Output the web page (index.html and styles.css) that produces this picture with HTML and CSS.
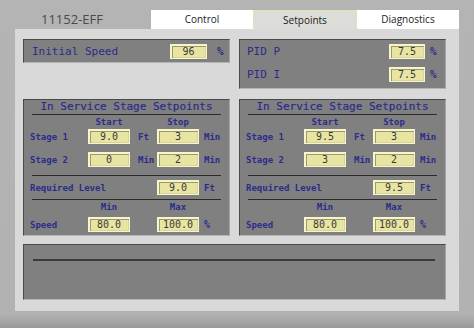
FILE: index.html
```html
<!DOCTYPE html>
<html>
<head>
<meta charset="utf-8">
<link rel="stylesheet" href="styles.css">
</head>
<body>
<div class="top">
  <div class="title">11152-EFF</div>
  <div class="tab">Control</div>
  <div class="tab active">Setpoints</div>
  <div class="tab">Diagnostics</div>
</div>
<div class="panel">
  <div class="grid">
    <div class="box box-speed">
      <span class="big-label">Initial Speed</span>
      <span class="val w37">96</span>
      <span class="unit pct u-speed">%</span>
    </div>
    <div class="box box-pid">
      <div class="pid-row"><span class="big-label">PID P</span><span class="val w36">7.5</span><span class="unit pct u-pid">%</span></div>
      <div class="pid-row"><span class="big-label">PID I</span><span class="val w36">7.5</span><span class="unit pct u-pid">%</span></div>
    </div>

    <div class="box stage">
      <div class="stage-head">In Service Stage Setpoints</div>
      <div class="rule"></div>
      <div class="srow colhead"><span></span><span class="ch">Start</span><span></span><span class="ch">Stop</span><span></span></div>
      <div class="srow r1"><span class="lbl">Stage 1</span><span class="val">9.0</span><span class="unit">Ft</span><span class="val">3</span><span class="unit u2">Min</span></div>
      <div class="srow r2"><span class="lbl">Stage 2</span><span class="val">0</span><span class="unit">Min</span><span class="val">2</span><span class="unit u2">Min</span></div>
      <div class="rule r-a"></div>
      <div class="srow r3"><span class="lbl span3">Required Level</span><span class="val">9.0</span><span class="unit u2">Ft</span></div>
      <div class="rule r-b"></div>
      <div class="srow colhead ch2"><span></span><span class="ch">Min</span><span></span><span class="ch">Max</span><span></span></div>
      <div class="srow r4"><span class="lbl">Speed</span><span class="val">80.0</span><span></span><span class="val">100.0</span><span class="unit u2 pct-s">%</span></div>
    </div>

    <div class="box stage">
      <div class="stage-head">In Service Stage Setpoints</div>
      <div class="rule"></div>
      <div class="srow colhead"><span></span><span class="ch">Start</span><span></span><span class="ch">Stop</span><span></span></div>
      <div class="srow r1"><span class="lbl">Stage 1</span><span class="val">9.5</span><span class="unit">Ft</span><span class="val">3</span><span class="unit u2">Min</span></div>
      <div class="srow r2"><span class="lbl">Stage 2</span><span class="val">3</span><span class="unit">Min</span><span class="val">2</span><span class="unit u2">Min</span></div>
      <div class="rule r-a"></div>
      <div class="srow r3"><span class="lbl span3">Required Level</span><span class="val">9.5</span><span class="unit u2">Ft</span></div>
      <div class="rule r-b"></div>
      <div class="srow colhead ch2"><span></span><span class="ch">Min</span><span></span><span class="ch">Max</span><span></span></div>
      <div class="srow r4"><span class="lbl">Speed</span><span class="val">80.0</span><span></span><span class="val">100.0</span><span class="unit u2 pct-s">%</span></div>
    </div>

    <div class="box bottom">
      <div class="bottom-rule"></div>
    </div>
  </div>
</div>
</body>
</html>
```
FILE: styles.css
```css
* { box-sizing: border-box; }
html, body { margin: 0; padding: 0; }
body {
  width: 474px;
  height: 328px;
  overflow: hidden;
  background: linear-gradient(to bottom, #b4b4b4 0, #b2b2b2 314px, #a8a8a8 320px, #9a9a9a 328px);
  font-family: "DejaVu Sans Mono", monospace;
}
.top {
  display: flex;
  align-items: flex-end;
  height: 29px;
}
.title {
  width: 151px;
  height: 19px;
  padding-left: 41px;
  line-height: 19px;
  font-family: "Open Sans", sans-serif;
  font-size: 13px;
  color: #4a4a4a;
}
.tab {
  width: 102px;
  height: 19px;
  background: #fff;
  text-align: center;
  line-height: 19px;
  font-family: "Open Sans", sans-serif;
  font-size: 10px;
  color: #222;
}
.tab.active {
  width: 104px;
  background: #dcdcd8;
  border: 1px solid #e4e0b2;
  border-bottom: none;
  line-height: 18px;
}
.panel {
  margin-left: 15px;
  width: 444px;
  height: 282px;
  background: #d9d9d9;
}
.grid {
  display: grid;
  grid-template-columns: 207px 207px;
  column-gap: 9px;
  row-gap: 10px;
  padding: 10px 0 0 8px;
  align-items: start;
}
.box {
  background: #808080;
  border-top: 1px solid #4a4a4a;
  border-left: 1px solid #4a4a4a;
  border-right: 1px solid #a4a4a4;
  border-bottom: 1px solid #b4b4b4;
}
.big-label {
  font-size: 11px;
  color: #2c2c8a;
  flex: 1;
}
.val {
  display: block;
  height: 15px;
  background: #e8e4a2;
  border: 1px solid #f8f5cc;
  box-shadow: inset 1px 1px 0 #f8f5cc, inset 2px 2px 0 #9c9870, inset -1px -1px 0 #d8d49a;
  text-align: center;
  font-size: 10px;
  line-height: 13px;
  color: #3a3a3a;
}
.unit {
  font-size: 9px;
  font-weight: bold;
  color: #2c2c8a;
}
.pct { font-size: 11px; }
.pct-s { font-size: 10px; }
.box-speed {
  height: 24px;
  display: flex;
  align-items: center;
  padding-left: 8px;
}
.w37 { width: 37px; }
.w36 { width: 36px; }
.u-speed { margin-left: 10px; width: 12px; }
.box-pid { height: 50px; }
.pid-row {
  display: flex;
  align-items: center;
  height: 23px;
  padding-left: 7px;
}
.u-pid { margin-left: 5px; width: 15px; }
.stage {
  height: 137px;
  display: flex;
  flex-direction: column;
}
.stage-head {
  height: 14px;
  line-height: 14px;
  text-align: center;
  font-size: 11px;
  color: #2c2c8a;
  -webkit-text-stroke: 0.2px #2c2c8a;
}
.rule {
  height: 1px;
  background: #2a2a2a;
  margin: 0 8px;
}
.r-a { margin-top: 8px; }
.r-b { margin-top: 4px; }
.srow {
  display: grid;
  grid-template-columns: 58px 42px 27px 42px 1fr;
  align-items: center;
  padding-left: 6px;
  height: 15px;
}
.srow .unit { padding-left: 8px; }
.srow .unit.u2 { padding-left: 5px; }
.colhead { height: 13px; }
.ch2 { height: 14px; }
.ch {
  text-align: center;
  font-size: 9px;
  font-weight: bold;
  color: #2c2c8a;
}
.lbl {
  font-size: 9px;
  font-weight: bold;
  color: #2c2c8a;
}
.span3 { grid-column: 1 / 4; }
.r1 { margin-top: 1px; }
.r2 { margin-top: 8px; }
.r3 { margin-top: 4px; }
.r4 { margin-top: 3px; }
.bottom {
  grid-column: 1 / -1;
  height: 56px;
  margin-top: -2px;
  padding: 14px 10px 0 9px;
}
.bottom-rule {
  height: 2px;
  background: #3a3a3a;
}
```
